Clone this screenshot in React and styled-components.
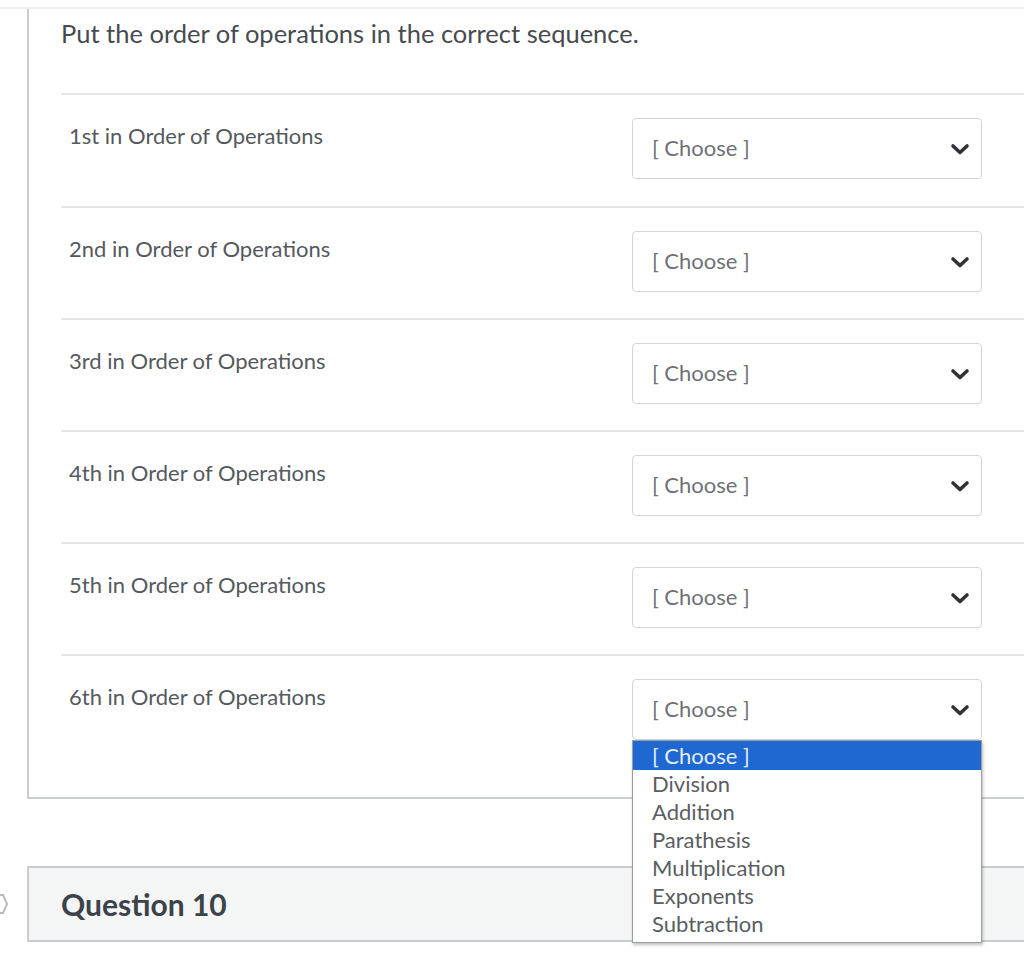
import styled, { createGlobalStyle } from "styled-components";

const GlobalStyle = createGlobalStyle`
  body {
    margin: 0;
    background: #fff;
    font-family: Lato, "Open Sans", sans-serif;
    color: #444;
  }
`;

const Page = styled.div`
  width: 1024px;
  height: 954px;
  overflow: hidden;
  border-top: 2px solid #ececec;
  margin-top: 7px;
  box-sizing: border-box;
`;

const Card = styled.div`
  margin-left: 27px;
  border-left: 2px solid #c9cdd0;
  border-bottom: 2px solid #c9cdd0;
  padding: 9px 0 0 32px;
`;

const Prompt = styled.p`
  margin: 0 0 45px;
  font-size: 25.5px;
  line-height: 30px;
  color: #474b4f;
`;

const Row = styled.div`
  position: relative;
  box-sizing: border-box;
  display: flex;
  justify-content: space-between;
  align-items: flex-start;
  height: ${p => p.h}px;
  border-top: 2px solid #e4e6e8;
  padding: 23px 42px 0 8px;
`;

const Label = styled.span`
  font-size: 22px;
  line-height: 30px;
  margin-top: 3px;
  color: #55595d;
`;

const SelectBox = styled.div`
  width: 350px;
  height: 61px;
  box-sizing: border-box;
  border: 1.5px solid #d3d6d9;
  border-radius: 4px;
  display: flex;
  align-items: center;
  justify-content: space-between;
  padding: 0 11px 0 19px;
  font-size: 22px;
  color: #6e7276;

  span {
    margin-top: -3px;
  }
`;

const Chevron = () => (
  <svg width="20" height="14" viewBox="0 0 20 14">
    <polyline points="3,4 10,10.5 17,4" fill="none" stroke="#2f3337" strokeWidth="3.6" strokeLinecap="round" strokeLinejoin="round" />
  </svg>
);

const Menu = styled.ul`
  position: absolute;
  top: 84px;
  right: 42px;
  width: 350px;
  box-sizing: border-box;
  margin: 0;
  padding: 0 0 4px;
  list-style: none;
  background: #fff;
  border: 1.5px solid #9a9ea2;
  box-shadow: 1px 2px 3px rgba(0, 0, 0, 0.25);
  z-index: 2;
`;

const MenuItem = styled.li`
  height: ${p => (p.selected ? 29 : 28)}px;
  line-height: ${p => (p.selected ? 29 : 28)}px;
  padding-left: 19px;
  font-size: 22px;
  background: ${p => (p.selected ? "#1f68d2" : "transparent")};
  color: ${p => (p.selected ? "#e2ecff" : "#5a5e62")};
`;

const Gap = styled.div`
  height: 67px;
`;

const QuestionWrap = styled.div`
  display: flex;
  align-items: center;
`;

const Marker = styled.div`
  width: 27px;
  flex: none;
  display: flex;
  align-items: center;
`;

const QuestionHeader = styled.div`
  flex: 1;
  height: 72px;
  background: #f4f5f5;
  border-top: 2px solid #c9cdd0;
  border-left: 2px solid #c9cdd0;
  border-bottom: 2px solid #c9cdd0;
  display: flex;
  align-items: center;
  padding-left: 32px;
  font-size: 30px;
  font-weight: 700;
  color: #3b4349;
`;

const rows = ["1st", "2nd", "3rd", "4th", "5th", "6th"];
const heights = [113, 112, 112, 112, 112, 143];
const options = ["Division", "Addition", "Parathesis", "Multiplication", "Exponents", "Subtraction"];

export default function App() {
  return (
    <>
      <GlobalStyle />
      <Page>
        <Card>
          <Prompt>Put the order of operations in the correct sequence.</Prompt>
          {rows.map((r, i) => {
            const last = i === rows.length - 1;
            return (
              <Row key={r} h={heights[i]}>
                <Label>{r} in Order of Operations</Label>
                <SelectBox>
                  <span>[ Choose ]</span>
                  <Chevron />
                </SelectBox>
                {last && (
                  <Menu>
                    <MenuItem selected>[ Choose ]</MenuItem>
                    {options.map(o => <MenuItem key={o}>{o}</MenuItem>)}
                  </Menu>
                )}
              </Row>
            );
          })}
        </Card>
        <Gap />
        <QuestionWrap>
          <Marker>
            <svg width="14" height="22" viewBox="0 0 14 22" style={{ marginLeft: -4 }}>
              <path d="M2 2 L7 2 L11 11 L7 20 L2 20" fill="none" stroke="#b8bcc0" strokeWidth="2" />
            </svg>
          </Marker>
          <QuestionHeader>Question 10</QuestionHeader>
        </QuestionWrap>
      </Page>
    </>
  );
}
